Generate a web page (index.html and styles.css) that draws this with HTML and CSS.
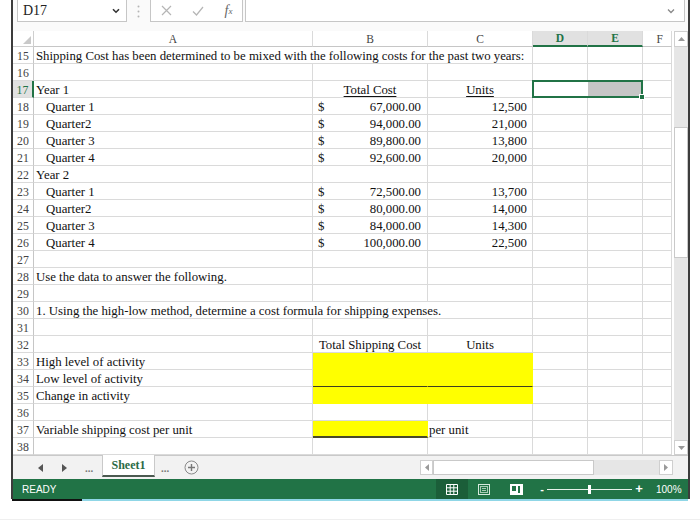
FILE: index.html
```html
<!DOCTYPE html>
<html>
<head>
<meta charset="utf-8">
<link rel="stylesheet" href="styles.css">
</head>
<body>
<div class="window">
  <div class="fbar">
    <div class="namebox"><span>D17</span>
      <svg width="8" height="6" viewBox="0 0 8 6"><path d="M1 1.2l3 3 3-3" stroke="#333" stroke-width="1.6" fill="none"/></svg>
    </div>
    <div class="fsep"><svg width="3" height="13" viewBox="0 0 3 13"><circle cx="1.5" cy="1.5" r="1" fill="#b5b5b5"/><circle cx="1.5" cy="6.5" r="1" fill="#b5b5b5"/><circle cx="1.5" cy="11.5" r="1" fill="#b5b5b5"/></svg></div>
    <div class="fbtns">
      <span><svg width="11" height="11" viewBox="0 0 11 11"><path d="M1 1l9 9M10 1l-9 9" stroke="#b5b5b5" stroke-width="1.2"/></svg></span>
      <span><svg width="12" height="10" viewBox="0 0 12 10"><path d="M1 5.5l3.5 3.5 6.5-8" stroke="#b5b5b5" stroke-width="1.2" fill="none"/></svg></span>
      <span class="fx"><i>f</i><sub>x</sub></span>
    </div>
    <div class="finput"><svg width="8" height="6" viewBox="0 0 8 6"><path d="M1 1.5l3 3 3-3" stroke="#888" stroke-width="1.3" fill="none"/></svg></div>
  </div>

  <div class="sheet">
    <div class="grid">
      <div class="row hdr">
        <div class="c corner"><svg width="8" height="8" viewBox="0 0 8 8"><path d="M8 0v8H0z" fill="#c9c9c9"/></svg></div>
        <div class="c ch">A</div><div class="c ch">B</div><div class="c ch">C</div>
        <div class="c ch on">D</div><div class="c ch on">E</div><div class="c ch f">F</div>
      </div>
      <div class="row"><div class="c rh">15</div><div class="c s3">Shipping Cost has been determined to be mixed with the following costs for the past two years:</div><div class="c"></div><div class="c"></div><div class="c"></div></div>
      <div class="row"><div class="c rh">16</div><div class="c"></div><div class="c"></div><div class="c"></div><div class="c"></div><div class="c"></div><div class="c"></div></div>
      <div class="row"><div class="c rh on">17</div><div class="c">Year 1</div><div class="c ctr"><u>Total Cost</u></div><div class="c ctr"><u>Units</u></div>
        <div class="c selcell"><div class="selbox"><div class="seld"></div><div class="sele"></div><div class="handle"></div></div></div><div class="c"></div></div>
      <div class="row"><div class="c rh">18</div><div class="c ind">Quarter 1</div><div class="c acc"><span>$</span><span>67,000.00</span></div><div class="c num">12,500</div><div class="c"></div><div class="c"></div><div class="c"></div></div>
      <div class="row"><div class="c rh">19</div><div class="c ind">Quarter2</div><div class="c acc"><span>$</span><span>94,000.00</span></div><div class="c num">21,000</div><div class="c"></div><div class="c"></div><div class="c"></div></div>
      <div class="row"><div class="c rh">20</div><div class="c ind">Quarter 3</div><div class="c acc"><span>$</span><span>89,800.00</span></div><div class="c num">13,800</div><div class="c"></div><div class="c"></div><div class="c"></div></div>
      <div class="row"><div class="c rh">21</div><div class="c ind">Quarter 4</div><div class="c acc"><span>$</span><span>92,600.00</span></div><div class="c num">20,000</div><div class="c"></div><div class="c"></div><div class="c"></div></div>
      <div class="row"><div class="c rh">22</div><div class="c">Year 2</div><div class="c"></div><div class="c"></div><div class="c"></div><div class="c"></div><div class="c"></div></div>
      <div class="row"><div class="c rh">23</div><div class="c ind">Quarter 1</div><div class="c acc"><span>$</span><span>72,500.00</span></div><div class="c num">13,700</div><div class="c"></div><div class="c"></div><div class="c"></div></div>
      <div class="row"><div class="c rh">24</div><div class="c ind">Quarter2</div><div class="c acc"><span>$</span><span>80,000.00</span></div><div class="c num">14,000</div><div class="c"></div><div class="c"></div><div class="c"></div></div>
      <div class="row"><div class="c rh">25</div><div class="c ind">Quarter 3</div><div class="c acc"><span>$</span><span>84,000.00</span></div><div class="c num">14,300</div><div class="c"></div><div class="c"></div><div class="c"></div></div>
      <div class="row"><div class="c rh">26</div><div class="c ind">Quarter 4</div><div class="c acc"><span>$</span><span>100,000.00</span></div><div class="c num">22,500</div><div class="c"></div><div class="c"></div><div class="c"></div></div>
      <div class="row"><div class="c rh">27</div><div class="c"></div><div class="c"></div><div class="c"></div><div class="c"></div><div class="c"></div><div class="c"></div></div>
      <div class="row"><div class="c rh">28</div><div class="c">Use the data to answer the following.</div><div class="c"></div><div class="c"></div><div class="c"></div><div class="c"></div><div class="c"></div></div>
      <div class="row"><div class="c rh">29</div><div class="c"></div><div class="c"></div><div class="c"></div><div class="c"></div><div class="c"></div><div class="c"></div></div>
      <div class="row"><div class="c rh">30</div><div class="c s3">1. Using the high-low method, determine a cost formula for shipping expenses.</div><div class="c"></div><div class="c"></div><div class="c"></div></div>
      <div class="row"><div class="c rh">31</div><div class="c"></div><div class="c"></div><div class="c"></div><div class="c"></div><div class="c"></div><div class="c"></div></div>
      <div class="row"><div class="c rh">32</div><div class="c"></div><div class="c ctr">Total Shipping Cost</div><div class="c ctr">Units</div><div class="c"></div><div class="c"></div><div class="c"></div></div>
      <div class="row"><div class="c rh">33</div><div class="c">High level of activity</div><div class="c y"></div><div class="c y"></div><div class="c"></div><div class="c"></div><div class="c"></div></div>
      <div class="row"><div class="c rh">34</div><div class="c">Low level of activity</div><div class="c yl"></div><div class="c yl"></div><div class="c"></div><div class="c"></div><div class="c"></div></div>
      <div class="row"><div class="c rh">35</div><div class="c">Change in activity</div><div class="c y"></div><div class="c y"></div><div class="c"></div><div class="c"></div><div class="c"></div></div>
      <div class="row"><div class="c rh">36</div><div class="c"></div><div class="c"></div><div class="c"></div><div class="c"></div><div class="c"></div><div class="c"></div></div>
      <div class="row"><div class="c rh">37</div><div class="c">Variable shipping cost per unit</div><div class="c yt"></div><div class="c pu">per unit</div><div class="c"></div><div class="c"></div><div class="c"></div></div>
      <div class="row"><div class="c rh">38</div><div class="c"></div><div class="c"></div><div class="c"></div><div class="c"></div><div class="c"></div><div class="c"></div></div>
    </div>
    <div class="vscroll">
      <div class="sbtn"><svg width="7" height="4" viewBox="0 0 7 4"><path d="M0 4L3.5 0 7 4z" fill="#9a9a9a"/></svg></div>
      <div class="vtrack"><div class="vthumb"></div></div>
      <div class="sbtn dn"><svg width="7" height="4" viewBox="0 0 7 4"><path d="M0 0h7L3.5 4z" fill="#9a9a9a"/></svg></div>
    </div>
  </div>

  <div class="tabs">
    <div class="tnav first"><svg width="5" height="8" viewBox="0 0 5 8"><path d="M5 0v8L0 4z" fill="#555"/></svg></div>
    <div class="tnav"><svg width="5" height="8" viewBox="0 0 5 8"><path d="M0 0v8l5-4z" fill="#555"/></svg></div>
    <div class="tdots">...</div>
    <div class="tab">Sheet1</div>
    <div class="tdots two">...</div>
    <div class="tadd"><svg width="15" height="15" viewBox="0 0 15 15"><circle cx="7.5" cy="7.5" r="6.5" fill="none" stroke="#8a8a8a"/><path d="M7.5 4v7M4 7.5h7" stroke="#777" stroke-width="1.4"/></svg></div>
    <div class="hscroll">
      <div class="hbtn"><svg width="4" height="7" viewBox="0 0 4 7"><path d="M4 0v7L0 3.5z" fill="#9a9a9a"/></svg></div>
      <div class="hthumb"></div>
      <div class="htrack"></div>
      <div class="hbtn"><svg width="4" height="7" viewBox="0 0 4 7"><path d="M0 0v7l4-3.5z" fill="#9a9a9a"/></svg></div>
    </div>
  </div>

  <div class="status">
    <span class="ready">READY</span>
    <div class="sright">
      <div class="vbtn on"><svg width="12" height="11" viewBox="0 0 12 11"><path d="M0.5 0.5h11v10h-11z M4.2 0.5v10 M7.8 0.5v10 M0.5 3.8h11 M0.5 7.2h11" stroke="#fff" fill="none"/></svg></div>
      <div class="vbtn"><svg width="12" height="11" viewBox="0 0 12 11"><rect x="0.5" y="0.5" width="11" height="10" fill="none" stroke="#d6e8dc"/><rect x="2.5" y="2.5" width="7" height="6" fill="none" stroke="#a9cbb5"/><path d="M4 4.5h4M4 6.5h4" stroke="#a9cbb5"/></svg></div>
      <div class="vbtn"><svg width="13" height="11" viewBox="0 0 13 11"><rect x="0" y="0" width="13" height="11" fill="#fff"/><rect x="2" y="2" width="4" height="5" fill="#217346"/><rect x="8" y="2" width="2" height="7" fill="#217346"/></svg></div>
      <span class="zm">-</span>
      <div class="slider"><div class="sthumb"></div></div>
      <span class="zp">+</span>
      <span class="pct">100%</span>
    </div>
  </div>
</div>
<div class="under"><div class="ublack"></div><div class="ucyan"></div></div>
<div class="faint"></div>
</body>
</html>
```

FILE: styles.css
```css
* { box-sizing: border-box; }
body {
  margin: 0;
  background: #fff;
  font-family: "Liberation Serif", "Times New Roman", serif;
  color: #111;
}
.window {
  margin-left: 11px;
  width: 679px;
  height: 499px;
  border-left: 2px solid #3c3c3c;
  border-right: 2px solid #3c3c3c;
  display: flex;
  flex-direction: column;
  background: #fafafa;
}

/* formula bar */
.fbar { height: 22px; display: flex; flex-shrink: 0; }
.namebox {
  margin-left: 4px;
  width: 110px;
  background: #fff;
  border: 1px solid #c6c6c6;
  border-top: none;
  display: flex;
  align-items: center;
  justify-content: space-between;
  padding: 0 6px 0 5px;
  font-size: 14px;
  color: #222;
}
.fsep { width: 23px; display: flex; align-items: center; justify-content: center; }
.fbtns {
  width: 93px;
  background: #fff;
  border: 1px solid #c6c6c6;
  border-top: none;
  display: grid;
  grid-template-columns: 31px 31px 31px;
  align-items: center;
  justify-items: center;
}
.fbtns span { display: flex; align-items: center; }
.fx { font-size: 14px; color: #666; font-style: italic; }
.fx sub { font-size: 9px; vertical-align: -1px; }
.finput {
  margin-left: 2px;
  width: 440px;
  background: #fff;
  border: 1px solid #c6c6c6;
  border-top: none;
  display: flex;
  align-items: center;
  justify-content: flex-end;
  padding-right: 9px;
}

/* sheet */
.sheet { margin-top: 9px; height: 424px; display: flex; background: #fff; flex-shrink: 0; }
.grid { width: 659px; overflow: hidden; }
.row {
  display: grid;
  grid-template-columns: 21px 279px 115px 105px 55px 55px 29px;
  grid-template-rows: 17px;
  height: 17px;
}
.row.hdr { height: 16px; grid-template-rows: 16px; }
.c {
  border-right: 1px solid #dadada;
  border-bottom: 1px solid #dadada;
  white-space: nowrap;
  font-size: 12.8px;
  line-height: 18px;
  padding: 0 2px;
  color: #111;
  min-height: 0;
}
.s3 { grid-column: span 3; }
.corner { display: flex; align-items: flex-end; justify-content: flex-end; padding: 0 2px 2px 0; border-color: #cfcfcf; }
.ch {
  text-align: center;
  font-size: 11.5px;
  line-height: 16px;
  color: #444;
  border-bottom-color: #c6c6c6;
}
.ch.on {
  background: #e1e1e1;
  color: #217346;
  font-weight: bold;
  border-bottom: 2px solid #217346;
  line-height: 15px;
}
.ch.f { text-align: right; padding-right: 8px; }
.rh {
  text-align: center;
  font-size: 11.8px;
  color: #444;
  padding: 0;
  border-right-color: #c6c6c6;
}
.rh.on { background: #e1e1e1; color: #217346; border-right: 2px solid #217346; }
.ind { padding-left: 12px; }
.ctr { text-align: center; }
.ctr u { text-underline-offset: 2px; text-decoration-thickness: 1px; }
.acc { display: flex; justify-content: space-between; padding: 0 6px 0 5px; }
.num { text-align: right; padding-right: 5px; }
.pu { padding-left: 1px; }
.y { background: #ffff00; border-color: #ffff00; }
.yl {
  background: #ffff00;
  border-right-color: #ffff00;
  border-bottom: 1px solid #3f3f22;
}
.yt {
  background: #ffff00;
  border-right-color: #ffff00;
  border-bottom: 2px solid #4a4a2a;
}

.selcell { grid-column: span 2; position: relative; padding: 0; }
.selbox {
  position: absolute;
  left: -1px; top: -1px; right: -1px; bottom: -1px;
  border: 2px solid #217346;
  display: flex;
}
.seld { width: 54px; background: #fff; }
.sele { flex: 1; background: #c6c6c6; }
.handle {
  position: absolute;
  right: -4px; bottom: -4px;
  width: 6px; height: 6px;
  background: #217346;
  border: 1px solid #fff;
}

.vscroll { width: 16px; display: flex; flex-direction: column; background: #fff; }
.sbtn {
  height: 16px;
  margin-left: 2px;
  background: #fff;
  border: 1px solid #cfcfcf;
  display: flex;
  align-items: center;
  justify-content: center;
}
.sbtn.dn { height: 15px; }
.vtrack { flex: 1; margin-left: 2px; background: #e6e6e6; padding-top: 80px; }
.vthumb { height: 131px; background: #fff; border: 1px solid #c9c9c9; }

/* tabs */
.tabs {
  height: 24px;
  flex-shrink: 0;
  background: #f2f2f2;
  border-top: 1px solid #c9c9c9;
  display: flex;
  align-items: center;
  font-family: "Liberation Serif", serif;
}
.tnav { width: 16px; height: 16px; display: flex; align-items: center; justify-content: center; margin-left: 8px; }
.tnav.first { margin-left: 19px; }
.tdots { width: 16px; margin-left: 9px; text-align: center; color: #777; font-weight: bold; font-size: 11px; line-height: 10px; }
.tdots.two { margin-left: 2px; }
.tab {
  margin-left: 5px;
  width: 53px;
  align-self: stretch;
  margin-top: -1px;
  background: #fff;
  border-left: 1px solid #c9c9c9;
  border-right: 1px solid #c9c9c9;
  border-bottom: 2px solid #4b5a50;
  margin-bottom: 2px;
  text-align: center;
  font-weight: bold;
  font-size: 12px;
  line-height: 20px;
  color: #2a6b45;
}
.tadd { margin-left: 11px; width: 15px; height: 15px; display: flex; }
.hscroll {
  margin-left: auto;
  margin-right: 15px;
  width: 253px;
  height: 15px;
  display: flex;
  background: #e6e6e6;
}
.hbtn { width: 13px; background: #fff; border: 1px solid #cfcfcf; display: flex; align-items: center; justify-content: center; }
.hbtn:last-child { width: 14px; }
.hthumb { width: 161px; background: #fff; border: 1px solid #c9c9c9; }
.htrack { flex: 1; }

/* status bar */
.status {
  height: 20px;
  flex-shrink: 0;
  background: #217346;
  display: flex;
  align-items: center;
  font-family: "Liberation Sans", Arial, sans-serif;
  color: #fff;
  font-size: 10px;
}
.ready { margin-left: 9px; }
.sright { margin-left: auto; display: flex; align-items: center; height: 100%; padding-right: 8px; }
.vbtn { width: 32px; height: 100%; display: flex; align-items: center; justify-content: center; }
.vbtn.on { background: #1b5e39; }
.zm { margin-left: 7px; width: 6px; font-weight: bold; font-size: 11px; text-align: center; }
.slider { margin-left: 2px; width: 85px; height: 1px; background: #e8f2ec; position: relative; }
.sthumb { position: absolute; left: 41px; top: -4px; width: 3px; height: 9px; background: #fff; }
.zp { margin-left: 2px; width: 10px; font-weight: bold; font-size: 13px; text-align: center; line-height: 10px; }
.pct { margin-left: 12px; width: 24px; }

.under { margin-left: 12px; width: 676px; height: 2px; display: flex; }
.ublack { width: 70px; background: #111; }
.ucyan { flex: 1; background: #8fd6e6; }
.faint { margin-top: 18px; height: 1px; background: #efefef; }
```
